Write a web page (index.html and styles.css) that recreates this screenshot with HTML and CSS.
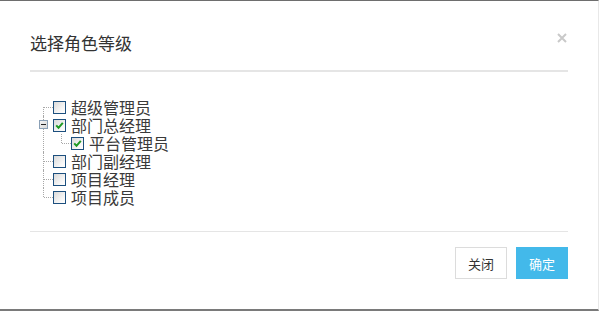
FILE: index.html
```html
<!DOCTYPE html>
<html lang="zh-CN">
<head>
<meta charset="utf-8">
<title>选择角色等级</title>
<link rel="stylesheet" href="styles.css">
</head>
<body>
<div class="dialog">
  <div class="head">
    <div class="title">选择角色等级</div>
    <svg class="close" width="10" height="10" viewBox="0 0 10 10"><path d="M1 1L9 9M9 1L1 9" stroke="#c9c9c9" stroke-width="2" fill="none"/></svg>
  </div>
  <div class="content">
    <ul class="tree">
      <li class="first">
        <div class="row"><span class="sw"></span><span class="cb"></span><span class="lbl">超级管理员</span></div>
      </li>
      <li>
        <div class="row"><span class="sw open"><i class="minus"></i></span><span class="cb checked"><svg width="11" height="11" viewBox="0 0 11 11"><path d="M2.2 5.4L4.5 7.8L8.8 2.8" stroke="#1f9a23" stroke-width="2" fill="none"/></svg></span><span class="lbl">部门总经理</span></div>
        <ul class="sub">
          <li class="last">
            <div class="row"><span class="sw"></span><span class="cb checked"><svg width="11" height="11" viewBox="0 0 11 11"><path d="M2.2 5.4L4.5 7.8L8.8 2.8" stroke="#1f9a23" stroke-width="2" fill="none"/></svg></span><span class="lbl">平台管理员</span></div>
          </li>
        </ul>
      </li>
      <li>
        <div class="row"><span class="sw"></span><span class="cb"></span><span class="lbl">部门副经理</span></div>
      </li>
      <li>
        <div class="row"><span class="sw"></span><span class="cb"></span><span class="lbl">项目经理</span></div>
      </li>
      <li class="last">
        <div class="row"><span class="sw"></span><span class="cb"></span><span class="lbl">项目成员</span></div>
      </li>
    </ul>
  </div>
  <div class="foot">
    <button class="btn btn-close">关闭</button>
    <button class="btn btn-ok">确定</button>
  </div>
</div>
</body>
</html>
```
FILE: styles.css
```css
* { box-sizing: border-box; }
html, body { margin: 0; padding: 0; background: #fff; }
body {
  font-family: "Noto Sans CJK SC", "Microsoft YaHei", sans-serif;
  color: #333;
}
.dialog {
  width: 599px;
  height: 311px;
  border-top: 1px solid #6e6e6e;
  border-bottom: 2px solid #7a7a7a;
  border-right: 1px solid #e8e8e8;
  background: #fff;
  display: flex;
  flex-direction: column;
}
.head {
  margin: 0 30px;
  height: 71px;
  padding-top: 30px;
  border-bottom: 2px solid #e5e5e5;
  display: flex;
  justify-content: space-between;
  align-items: flex-start;
}
.title {
  font-size: 17px;
  line-height: 24px;
  color: #333;
}
.close {
  margin-top: 2px;
  margin-right: 1px;
  display: block;
}
.content {
  height: 159px;
  padding: 26px 0 0 35px;
}
.tree, .sub {
  list-style: none;
  margin: 0;
  padding: 0;
}
.sub { padding-left: 18px; }
.tree li { position: relative; }
.tree li::before {
  content: "";
  position: absolute;
  left: 8px;
  top: 0;
  bottom: 0;
  border-left: 1px dotted #a8a8a8;
}
.tree li.first::before { top: 9px; }
.tree li.last::before { bottom: auto; height: 9px; }
.row {
  display: flex;
  align-items: center;
  height: 18px;
  position: relative;
}
.sw {
  width: 18px;
  height: 18px;
  position: relative;
  flex: none;
}
.sw::after {
  content: "";
  position: absolute;
  left: 9px;
  top: 9px;
  width: 9px;
  border-top: 1px dotted #a8a8a8;
}
.sw.open::after { display: none; }
.minus {
  position: absolute;
  left: 4px;
  top: 4px;
  width: 9px;
  height: 9px;
  border: 1px solid #8aa0b6;
  background: linear-gradient(135deg, #f4f4f4, #d8d8d8);
  z-index: 1;
}
.minus::after {
  content: "";
  position: absolute;
  left: 1px;
  top: 3px;
  width: 5px;
  height: 1px;
  background: #222;
}
.cb {
  width: 13px;
  height: 13px;
  flex: none;
  border: 1px solid #1c4f7e;
  background: linear-gradient(135deg, #d9d9d9 0%, #f7f7f7 70%, #fff 100%);
  display: flex;
  align-items: center;
  justify-content: center;
}
.cb svg { display: block; }
.lbl {
  margin-left: 5px;
  font-size: 16px;
  line-height: 18px;
  color: #3a3a3a;
  white-space: nowrap;
}
.foot {
  margin: 0 30px;
  border-top: 1px solid #e5e5e5;
  padding-top: 15px;
  display: flex;
  justify-content: flex-end;
  gap: 9px;
}
.btn {
  width: 52px;
  height: 32px;
  font-family: "Noto Sans CJK SC", "Microsoft YaHei", sans-serif;
  font-size: 13px;
  padding: 0;
  margin: 0;
  cursor: pointer;
}
.btn-close {
  background: #fff;
  border: 1px solid #dcdcdc;
  color: #333;
}
.btn-ok {
  background: #43b9ea;
  border: 1px solid #43b9ea;
  color: #fff;
}
```
